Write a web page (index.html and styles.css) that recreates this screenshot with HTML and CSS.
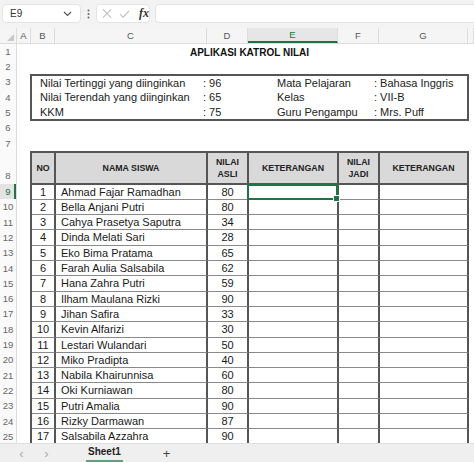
FILE: index.html
```html
<!DOCTYPE html>
<html lang="id">
<head>
<meta charset="utf-8">
<title>Aplikasi Katrol Nilai</title>
<link rel="stylesheet" href="styles.css">
</head>
<body>
<div class="app">
  <div class="toolbar">
    <div class="namebox"><span>E9</span>
      <svg class="chev" width="9" height="6" viewBox="0 0 9 6"><path d="M1 1 L4.5 4.5 L8 1" fill="none" stroke="#555" stroke-width="1.2"/></svg>
    </div>
    <div class="vdots">
      <svg width="3" height="10" viewBox="0 0 3 10"><circle cx="1.5" cy="1.5" r="1" fill="#666"/><circle cx="1.5" cy="5" r="1" fill="#666"/><circle cx="1.5" cy="8.5" r="1" fill="#666"/></svg>
    </div>
    <div class="fxbox">
      <svg width="11" height="11" viewBox="0 0 11 11"><path d="M1 1 L10 10 M10 1 L1 10" stroke="#bdbdbd" stroke-width="1.1" fill="none"/></svg>
      <svg width="12" height="10" viewBox="0 0 12 10"><path d="M1 5 L4.5 8.5 L11 1.5" stroke="#bdbdbd" stroke-width="1.1" fill="none"/></svg>
      <span class="fx">fx</span>
    </div>
    <div class="formula"></div>
  </div>

  <div class="sheet">
    <div class="colheads">
      <div class="corner"><svg width="7" height="7" viewBox="0 0 7 7"><path d="M7 0 L7 7 L0 7 Z" fill="#c8c8c8"/></svg></div>
      <div class="ch ch-a">A</div>
      <div class="ch ch-b">B</div>
      <div class="ch ch-c">C</div>
      <div class="ch ch-d">D</div>
      <div class="ch ch-e active">E</div>
      <div class="ch ch-f">F</div>
      <div class="ch ch-g">G</div>
      <div class="ch ch-h"></div>
    </div>

    <div class="body">
      <div class="rownums">
        <div class="rn r">1</div>
        <div class="rn r">2</div>
        <div class="rn r">3</div>
        <div class="rn r">4</div>
        <div class="rn r">5</div>
        <div class="rn r">6</div>
        <div class="rn r">7</div>
        <div class="rn tall">8</div>
        <div class="rn d active">9</div>
        <div class="rn d">10</div>
        <div class="rn d">11</div>
        <div class="rn d">12</div>
        <div class="rn d">13</div>
        <div class="rn d">14</div>
        <div class="rn d">15</div>
        <div class="rn d">16</div>
        <div class="rn d">17</div>
        <div class="rn d">18</div>
        <div class="rn d">19</div>
        <div class="rn d">20</div>
        <div class="rn d">21</div>
        <div class="rn d">22</div>
        <div class="rn d">23</div>
        <div class="rn d">24</div>
        <div class="rn d">25</div>
      </div>

      <div class="cells">
        <div class="row title-row"><div class="title">APLIKASI KATROL NILAI</div></div>
        <div class="row"></div>
        <div class="infobox">
          <div class="info-line"><span>Nilai Tertinggi yang diinginkan</span><span>: 96</span><span>Mata Pelajaran</span><span>: Bahasa Inggris</span></div>
          <div class="info-line"><span>Nilai Terendah yang diinginkan</span><span>: 65</span><span>Kelas</span><span>: VII-B</span></div>
          <div class="info-line"><span>KKM</span><span>: 75</span><span>Guru Pengampu</span><span>: Mrs. Puff</span></div>
        </div>
        <div class="row"></div>
        <div class="row short"></div>

        <div class="grade">
          <div class="g-head">
            <div class="hc">NO</div>
            <div class="hc">NAMA SISWA</div>
            <div class="hc">NILAI<br>ASLI</div>
            <div class="hc">KETERANGAN</div>
            <div class="hc">NILAI<br>JADI</div>
            <div class="hc">KETERANGAN</div>
          </div>
          <div class="g-row"><div class="c num">1</div><div class="c name">Ahmad Fajar Ramadhan</div><div class="c num">80</div><div class="c sel"></div><div class="c"></div><div class="c"></div></div>
          <div class="g-row"><div class="c num">2</div><div class="c name">Bella Anjani Putri</div><div class="c num">80</div><div class="c"></div><div class="c"></div><div class="c"></div></div>
          <div class="g-row"><div class="c num">3</div><div class="c name">Cahya Prasetya Saputra</div><div class="c num">34</div><div class="c"></div><div class="c"></div><div class="c"></div></div>
          <div class="g-row"><div class="c num">4</div><div class="c name">Dinda Melati Sari</div><div class="c num">28</div><div class="c"></div><div class="c"></div><div class="c"></div></div>
          <div class="g-row"><div class="c num">5</div><div class="c name">Eko Bima Pratama</div><div class="c num">65</div><div class="c"></div><div class="c"></div><div class="c"></div></div>
          <div class="g-row"><div class="c num">6</div><div class="c name">Farah Aulia Salsabila</div><div class="c num">62</div><div class="c"></div><div class="c"></div><div class="c"></div></div>
          <div class="g-row"><div class="c num">7</div><div class="c name">Hana Zahra Putri</div><div class="c num">59</div><div class="c"></div><div class="c"></div><div class="c"></div></div>
          <div class="g-row"><div class="c num">8</div><div class="c name">Ilham Maulana Rizki</div><div class="c num">90</div><div class="c"></div><div class="c"></div><div class="c"></div></div>
          <div class="g-row"><div class="c num">9</div><div class="c name">Jihan Safira</div><div class="c num">33</div><div class="c"></div><div class="c"></div><div class="c"></div></div>
          <div class="g-row"><div class="c num">10</div><div class="c name">Kevin Alfarizi</div><div class="c num">30</div><div class="c"></div><div class="c"></div><div class="c"></div></div>
          <div class="g-row"><div class="c num">11</div><div class="c name">Lestari Wulandari</div><div class="c num">50</div><div class="c"></div><div class="c"></div><div class="c"></div></div>
          <div class="g-row"><div class="c num">12</div><div class="c name">Miko Pradipta</div><div class="c num">40</div><div class="c"></div><div class="c"></div><div class="c"></div></div>
          <div class="g-row"><div class="c num">13</div><div class="c name">Nabila Khairunnisa</div><div class="c num">60</div><div class="c"></div><div class="c"></div><div class="c"></div></div>
          <div class="g-row"><div class="c num">14</div><div class="c name">Oki Kurniawan</div><div class="c num">80</div><div class="c"></div><div class="c"></div><div class="c"></div></div>
          <div class="g-row"><div class="c num">15</div><div class="c name">Putri Amalia</div><div class="c num">90</div><div class="c"></div><div class="c"></div><div class="c"></div></div>
          <div class="g-row"><div class="c num">16</div><div class="c name">Rizky Darmawan</div><div class="c num">87</div><div class="c"></div><div class="c"></div><div class="c"></div></div>
          <div class="g-row"><div class="c num">17</div><div class="c name">Salsabila Azzahra</div><div class="c num">90</div><div class="c"></div><div class="c"></div><div class="c"></div></div>
        </div>
      </div>
    </div>
  </div>

  <div class="tabs">
    <span class="nav">&#x2039;</span>
    <span class="nav">&#x203A;</span>
    <span class="tab">Sheet1</span>
    <span class="plus">+</span>
  </div>
</div>
</body>
</html>
```

FILE: styles.css
```css
* { box-sizing: border-box; }
html, body { margin: 0; padding: 0; }
body {
  width: 474px;
  height: 462px;
  overflow: hidden;
  font-family: "Liberation Sans", Arial, sans-serif;
  color: #1f1f1f;
  background: #fff;
}
.app {
  display: flex;
  flex-direction: column;
  height: 462px;
}

/* toolbar */
.toolbar {
  height: 28px;
  flex: none;
  background: #f3f3f3;
  display: flex;
  align-items: flex-start;
  padding-top: 4px;
}
.namebox {
  margin-left: 2px;
  width: 79px;
  height: 19px;
  background: #fff;
  border: 1px solid #e4e4e4;
  border-radius: 4px;
  display: flex;
  align-items: center;
  justify-content: space-between;
  padding: 0 8px 0 7px;
  font-size: 10px;
  color: #333;
}
.vdots {
  width: 15px;
  height: 19px;
  display: flex;
  align-items: center;
  justify-content: center;
}
.fxbox {
  width: 54px;
  height: 19px;
  background: #fff;
  border: 1px solid #e4e4e4;
  border-radius: 4px;
  display: flex;
  align-items: center;
  gap: 7px;
  padding-left: 5px;
}
.fx {
  font-family: "Liberation Serif", "Times New Roman", serif;
  font-style: italic;
  font-weight: bold;
  font-size: 12px;
  color: #333;
  margin-left: 2px;
}
.formula {
  margin-left: 5px;
  flex: 1;
  height: 19px;
  background: #fff;
  border: 1px solid #e4e4e4;
  border-right: none;
  border-radius: 4px 0 0 4px;
}

/* sheet */
.sheet {
  flex: 1;
  display: flex;
  flex-direction: column;
  overflow: hidden;
  background: #fff;
}
.colheads {
  height: 15.5px;
  flex: none;
  display: grid;
  grid-template-columns: 17px 14px 24px 152px 41px 90px 41px 89px 1fr;
  background: #f5f5f5;
  border-bottom: 1px solid #dcdcdc;
  font-size: 9.5px;
  color: #555;
}
.corner {
  display: flex;
  align-items: flex-end;
  justify-content: flex-end;
  padding: 0 2px 2px 0;
  border-right: 1px solid #dcdcdc;
}
.ch {
  display: flex;
  align-items: center;
  justify-content: center;
  border-right: 1px solid #dcdcdc;
}
.ch.active {
  background: #e6e6e6;
  color: #217346;
  border-bottom: 2px solid #217346;
}

.body {
  flex: 1;
  display: flex;
  overflow: hidden;
}
.rownums {
  width: 17px;
  flex: none;
  background: #fafafa;
  border-right: 1px solid #dcdcdc;
  font-size: 9.5px;
  color: #666;
}
.rn {
  display: flex;
  align-items: center;
  justify-content: center;
}
.rn.r { height: 15.35px; }
.rn.tall { height: 33px; align-items: flex-end; padding-bottom: 3px; }
.rn.d { height: 15.3px; }
.rn.active {
  background: #e3e3e3;
  color: #217346;
  box-shadow: inset -2px 0 0 #217346;
}

.cells {
  flex: 1;
  display: flex;
  flex-direction: column;
  padding-left: 13px;
}
.row { height: 15.35px; flex: none; }
.row.short { height: 14.5px; }
.title-row {
  width: 439px;
  display: flex;
  align-items: flex-end;
  justify-content: center;
}
.title {
  font-weight: bold;
  font-size: 10px;
  color: #111;
  line-height: 12px;
}

.infobox {
  width: 439px;
  height: 46.5px;
  flex: none;
  border: 2px solid #555;
  padding-left: 8px;
  display: flex;
  flex-direction: column;
  justify-content: center;
}
.info-line {
  display: grid;
  grid-template-columns: 163px 74px 97px 1fr;
  height: 14.5px;
  align-items: center;
  font-size: 11px;
  color: #222;
  white-space: nowrap;
}

/* grade table */
.grade {
  width: 439px;
  flex: none;
  border-top: 2px solid #555;
  border-left: 2px solid #555;
}
.g-head, .g-row {
  display: grid;
  grid-template-columns: 24px 152px 41px 90px 41px 89px;
}
.hc {
  height: 32px;
  background: #d9d9d9;
  border-right: 2px solid #555;
  border-bottom: 2px solid #555;
  display: flex;
  align-items: center;
  justify-content: center;
  text-align: center;
  font-weight: bold;
  font-size: 8.8px;
  line-height: 12px;
  color: #222;
}
.c {
  height: 15.3px;
  border-right: 2px solid #555;
  border-bottom: 1px solid #8a8a8a;
  font-size: 11px;
  line-height: 14px;
  color: #1a1a1a;
  white-space: nowrap;
  overflow: visible;
}
.c.num { text-align: center; }
.c.name { padding-left: 5px; }
.c.sel { position: relative; }
.c.sel::before {
  content: "";
  position: absolute;
  left: -2px;
  top: -1px;
  right: -1px;
  bottom: -1px;
  border: 2px solid #217346;
}
.c.sel::after {
  content: "";
  position: absolute;
  right: -3px;
  bottom: -3px;
  width: 5px;
  height: 5px;
  background: #217346;
  border: 1px solid #fff;
}

/* tabs */
.tabs {
  height: 19px;
  flex: none;
  background: #efefef;
  border-top: 1px solid #e0e0e0;
  display: flex;
  align-items: center;
  font-size: 10px;
}
.nav {
  color: #aaa;
  font-size: 13px;
  width: 25px;
  text-align: center;
  margin-left: 0;
}
.nav:first-child { margin-left: 9px; }
.tab {
  margin-left: 27px;
  font-weight: bold;
  color: #222;
  height: 18px;
  line-height: 16px;
  padding: 0 2px;
  border-bottom: 2px solid #5aa27c;
}
.plus {
  margin-left: 40px;
  color: #444;
  font-size: 13px;
}
```
